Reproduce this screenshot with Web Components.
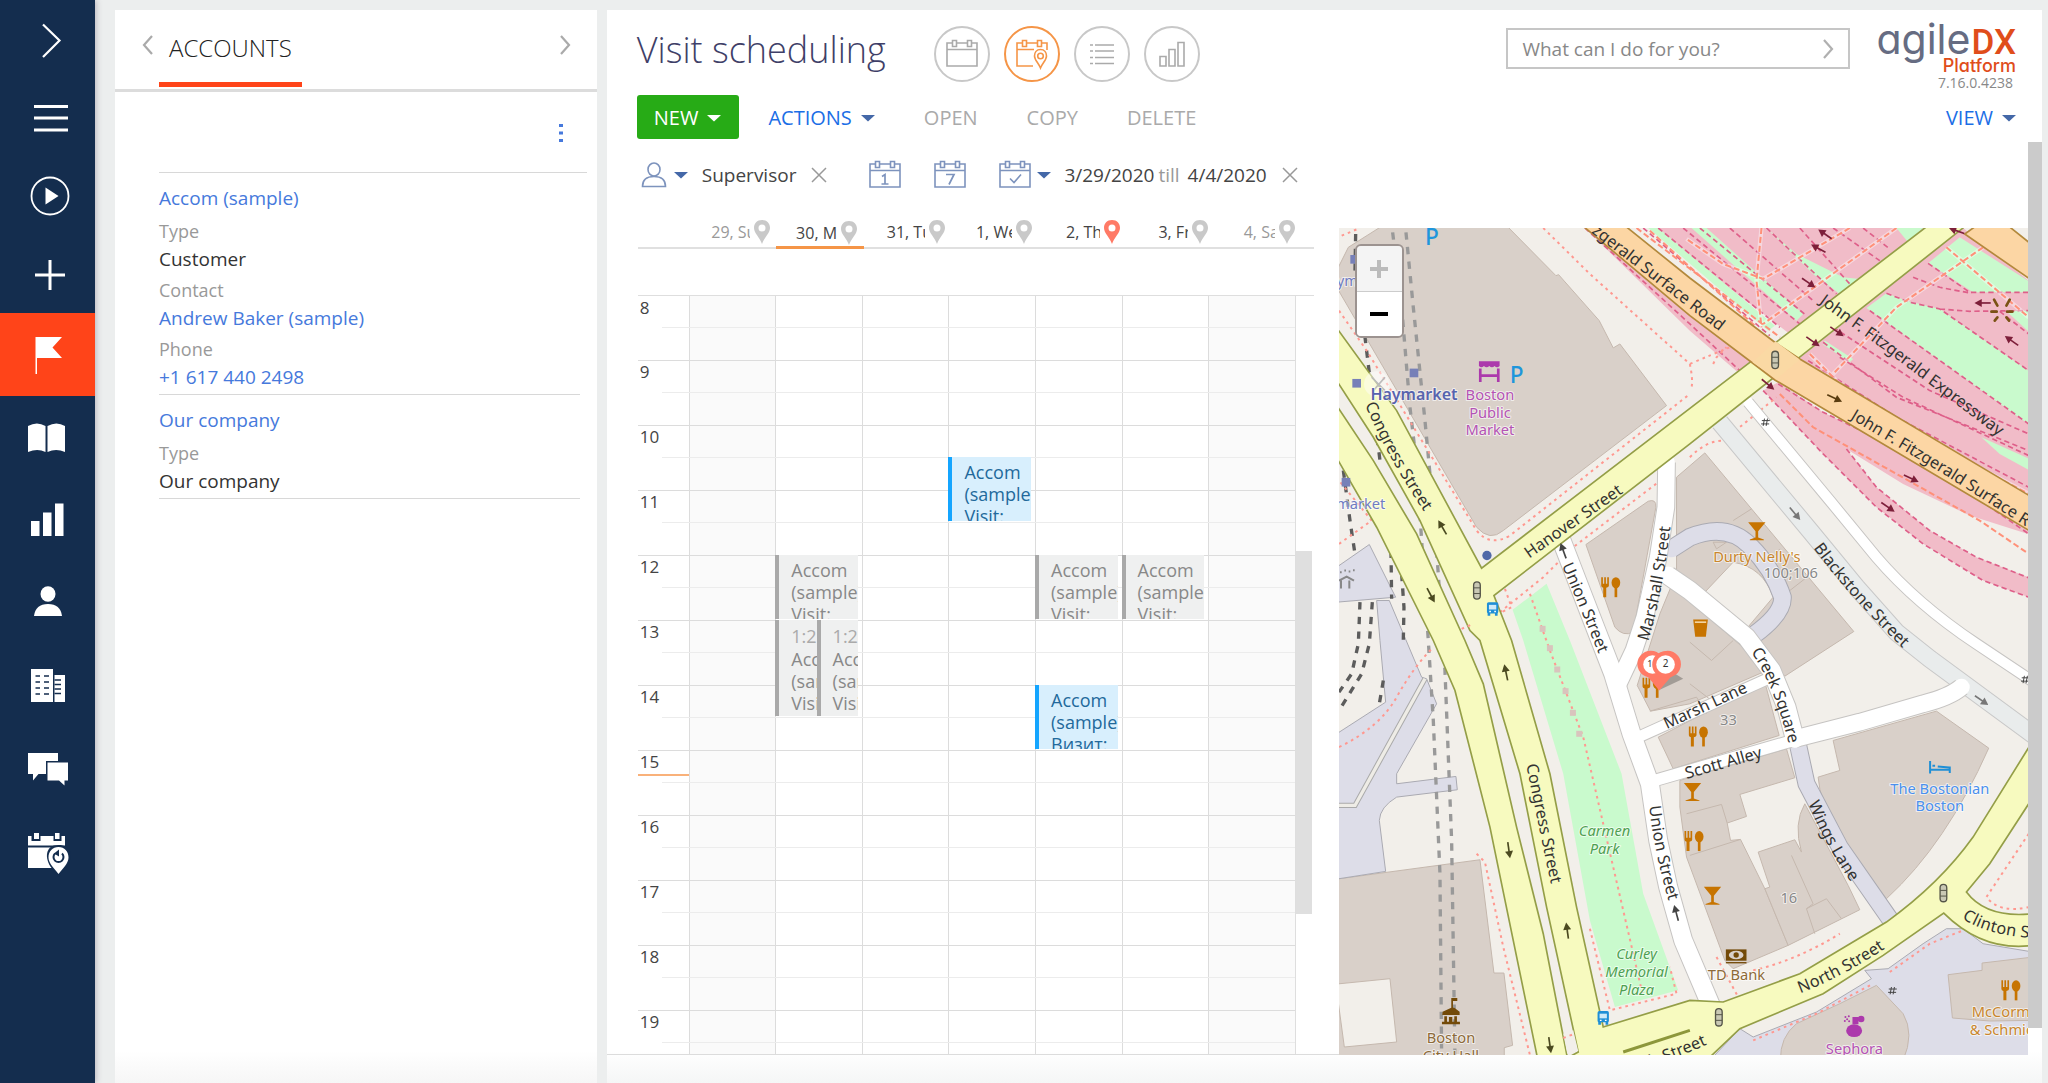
<!DOCTYPE html>
<html lang="en">
<head>
<meta charset="utf-8">
<title>Visit scheduling</title>
<style>
  html, body { margin: 0; height: 100%; }
  body {
    font-family: "Open Sans", "Noto Sans", sans-serif;
    font-size: 19px;
    color: #444;
    background: #eceeee;
    overflow: hidden;
  }
  a { color: #4679dc; text-decoration: none; }
</style>
</head>
<body>
<app-shell>
  <side-nav slot="nav"></side-nav>
  <account-panel slot="aside" heading="ACCOUNTS">
    <account-card>
      <a slot="name" href="#accom">Accom (sample)</a>
      <account-field label="Type">Customer</account-field>
      <account-field label="Contact"><a href="#baker">Andrew Baker (sample)</a></account-field>
      <account-field label="Phone"><a href="#phone">+1 617 440 2498</a></account-field>
    </account-card>
    <account-card last>
      <a slot="name" href="#our">Our company</a>
      <account-field label="Type">Our company</account-field>
    </account-card>
  </account-panel>
  <schedule-page></schedule-page>
</app-shell>

<script>
const base = `
  *, *::before, *::after { box-sizing: border-box; }
  button { font: inherit; color: inherit; background: none; border: 0; padding: 0; margin: 0; cursor: pointer; }
  svg { display: block; }
`;
function define(name, css, html) {
  customElements.define(name, class extends HTMLElement {
    constructor() {
      super();
      this.attachShadow({ mode: 'open' });
    }
    connectedCallback() {
      const body = typeof html === 'function' ? html(this) : html;
      this.shadowRoot.innerHTML = `<style>${base}${css}</style>${body}`;
    }
  });
}

/* ---------- icons ---------- */
const cal = (inner) => `<g fill="none" stroke="currentColor" stroke-width="1.6"><path d="M6.5 5H1v23h30V5h-5.500M10.500 5h11M1 11.500h30"/><path d="M6.500 2.500h4v6h-4zM21.500 2.500h4v6h-4z"/></g>${inner}`;
const ICONS = {
  expand: ['95 78', '<path d="M43 24.500 59.500 40.500 43 57" fill="none" stroke="#fff" stroke-width="2.200"/>'],
  menu: ['95 78', '<path d="M34 28.500h34M34 40h34M34 52h34" stroke="#fff" stroke-width="3"/>'],
  play: ['95 78', '<circle cx="50" cy="40" r="18.500" fill="none" stroke="#fff" stroke-width="1.800"/><path d="M45.500 31.500v17l13-8.500z" fill="#fff"/>'],
  plus: ['95 79', '<path d="M35 41h30M50 26v30" stroke="#fff" stroke-width="3"/>'],
  flag: ['95 83', '<path d="M35.500 24H62l-9.500 10.500L62 45H37v16h-1.500z" fill="#fff"/>'],
  book: ['95 83', '<path d="M28 30q9-5 17.500 0v26q-8-4-17.500 0zM47.500 30q9-5 17.500 0v26q-9-4-17.500 0z" fill="#fff"/>'],
  chart: ['95 83', '<path d="M31 42h8.500v15H31zM43 33.500h8.500V57H43zM55 24.500h8.500V57H55z" fill="#fff"/>'],
  person: ['95 83', '<ellipse cx="48" cy="32" rx="7.500" ry="7.700" fill="#fff"/><path d="M34 54q1.500-12 14-12t14 12z" fill="#fff"/>'],
  building: ['95 83', '<path d="M31 24h22v33H31zM54.500 30H65v27H54.500z" fill="#fff"/><path d="M35.500 31h4.500m4 0h5m-13.500 6h4.500m4 0h5m-13.500 6h4.500m4 0h5m-13.500 6h4.500m4 0h5M54.500 35h6.500m-6.500 4.500h6.500m-6.500 4.500h6.500m-6.500 4.500h6.500" stroke="#142d4e" stroke-width="1.500"/>'],
  chat: ['95 83', '<path d="M28 25h30v8H46v13h-7.500L33 52.500V46h-5z" fill="#fff"/><path d="M47.500 34.500H68v18h-3.500v5l-5.500-5H47.500z" fill="#fff"/>'],
  visits: ['95 83', '<path d="M28 25h3.500v5h9v-5h13v5h8v-5H65v9.500H28zM34 22h5v6h-5zM55 22h4.500v6H55z" fill="#fff"/><path d="M28 36.500h37V57H28z" fill="#fff"/><path d="M58.500 34c-14 0-14 14-7 23l7 9 8-10c8-12 4-22-8-22z" fill="#142d4e"/><path d="M58.500 36c-6 0-10 4.500-10 10.500 0 6 6 11 10 16.500 4-5.500 10-10.500 10-16.500 0-6-4-10.500-10-10.500z" fill="#fff"/><path d="M55 42.500a5 5 0 1 0 7 0" fill="none" stroke="#142d4e" stroke-width="2"/><path d="M54 42.500l5-4v7z" fill="#142d4e"/>'],
  calendar: ['32 32', cal('')],
  calmap: ['32 32', '<g fill="none" stroke="currentColor" stroke-width="1.600"><path d="M6.500 5H1v23h16M26 5h5v7M10.500 5h11M1 11.500h17"/><path d="M6.500 2.500h4v6h-4zM21.500 2.500h4v6h-4z"/><path d="M24.500 11.500c-4 0-6 3-6 6.500 0 4 4 7 6 12 2-5 6-8 6-12 0-3.500-2-6.500-6-6.500z"/><circle cx="24.500" cy="18" r="2.800"/></g>'],
  list: ['32 32', '<path d="M4 7h3m2 0h19M4 13h3m2 0h19M4 19.500h3m2 0h19M4 25.500h3m2 0h19" stroke="currentColor" stroke-width="1.600"/>'],
  bars: ['32 32', '<path d="M4 18.500h6V28H4zM13 11.500h6V28h-6zM22 4.500h6V28h-6z" fill="none" stroke="currentColor" stroke-width="1.600"/>'],
  day: ['32 32', cal('<path d="M13 17.500l3-2V25m-3.500 0h7" fill="none" stroke="currentColor" stroke-width="1.700"/>')],
  week: ['32 32', cal('<path d="M12 15.500h8L15 25.500" fill="none" stroke="currentColor" stroke-width="1.700"/>')],
  check: ['32 32', cal('<path d="M11 19.500l4 4 7-8" fill="none" stroke="currentColor" stroke-width="1.600"/>')],
  user: ['26 26', '<g fill="none" stroke="currentColor" stroke-width="1.600"><ellipse cx="13" cy="7.500" rx="6" ry="6.500"/><path d="M1.500 24.500c0-7 4-10 11.500-10s11.500 3 11.500 10z"/></g>'],
  caret: ['14 8', '<path d="M0 1h14L7 7.500z" fill="currentColor"/>'],
  close: ['16 16', '<path d="M1 1l14 14M15 1 1 15" stroke="currentColor" stroke-width="1.500"/>'],
  left: ['12 20', '<path d="M10 1 2 10l8 9" fill="none" stroke="currentColor" stroke-width="2.200"/>'],
  right: ['12 20', '<path d="M2 1l8 9-8 9" fill="none" stroke="currentColor" stroke-width="2.200"/>'],
  dots: ['4 20', '<path d="M0 1h4v3H0zM0 8.500h4v3H0zM0 16h4v3H0z" fill="currentColor"/>'],
  pin: ['16 24', '<path fill-rule="evenodd" d="M8 0C3 0 0 3.500 0 8c0 5 5.500 9 8 16 2.500-7 8-11 8-16 0-4.500-3-8-8-8zm0 4.500a3.500 3.500 0 1 1 0 7 3.500 3.500 0 0 1 0-7z" fill="currentColor"/>']
};
define('ui-icon', ':host{display:block;flex:none}', el => {
  const [size, art] = ICONS[el.getAttribute('name')];
  const [w, h] = size.split(' ');
  return `<svg width="${w}" height="${h}" viewBox="0 0 ${w} ${h}" aria-hidden="true">${art}</svg>`;
});

/* ---------- page frame ---------- */
define('app-shell', `
  :host { display: flex; height: 100vh; }
  .area { flex: 1; min-width: 0; display: flex; gap: 10px; padding: 10px 6px 0 20px; }
  .aside { flex: 0 0 25%; display: flex; }
  .main { flex: 1; min-width: 0; display: flex; }
`, `<slot name="nav"></slot><div class="area"><div class="aside"><slot name="aside"></slot></div><div class="main"><slot></slot></div></div>`);

define('side-nav', `
  :host { display: block; flex: 0 0 95px; background: #142d4e; box-shadow: 1px 0 6px rgba(60,40,70,.3); position: relative; }
  nav { display: flex; flex-direction: column; }
  .active { background: #ff4419; }
`, `<nav aria-label="Main">${[['expand','Expand'],['menu','Menu'],['play','Run process'],['plus','Add'],['flag','Field sales'],['book','Knowledge base'],['chart','Dashboards'],['person','Contacts'],['building','Accounts'],['chat','Feed'],['visits','Visits']]
  .map(([n, t]) => `<button aria-label="${t}" class="${n === 'flag' ? 'active' : ''}"><ui-icon name="${n}"></ui-icon></button>`).join('')}</nav>`);

/* ---------- accounts ---------- */
define('account-panel', `
  :host { display: flex; flex-direction: column; flex: 1; background: linear-gradient(#fff 97%, #f6f6f6); }
  header { display: flex; align-items: stretch; height: 82px; padding: 0 26px 2px 27px; border-bottom: 3px solid #dcdcdc; color: #aaa; }
  h2 { margin: 0 auto 0 5px; padding: 2px 10px 0; border-bottom: 5px solid #ff4419; font-size: 24px; font-weight: 300; line-height: 72px; color: #222; }
  header button { align-self: center; padding-bottom: 8px; }
  .tools { display: flex; justify-content: flex-end; height: 80px; padding: 31px 34px 0 0; color: #4679dc; }
  .tools button { align-self: flex-start; }
  .cards { padding: 0 10px 0 44px; }
`, el => `<header><button aria-label="Previous"><ui-icon name="left"></ui-icon></button><h2>${el.getAttribute('heading')}</h2><button aria-label="Next"><ui-icon name="right"></ui-icon></button></header>
  <div class="tools"><button aria-label="More"><ui-icon name="dots"></ui-icon></button></div>
  <div class="cards"><slot></slot></div>`);

define('account-card', `
  :host { display: block; border-top: 1px solid #d8d8d8; padding-top: 11px; padding-bottom: 3px; line-height: 28px; }
  :host([last]) { margin-right: 7px; border-bottom: 1px solid #d8d8d8; }
  .name { padding-bottom: 2px; }
`, `<div class="name"><slot name="name"></slot></div><slot></slot>`);

define('account-field', `
  :host { display: block; padding-top: 3px; }
  .label { font-size: 18px; color: #999; }
  .value { color: #333; }
`, el => `<div class="label">${el.getAttribute('label')}</div><div class="value"><slot></slot></div>`);

/* ---------- schedule page ---------- */
define('schedule-page', `
  :host { display: flex; flex-direction: column; flex: 1; min-width: 0; background: linear-gradient(#fff 97%, #f5f6f6); }
  .top { display: flex; align-items: center; height: 85px; padding: 2px 26px 0 30px; }
  h1 { margin: 0 48px 0 0; font-size: 36px; font-weight: 300; line-height: 50px; color: #3f3f68; padding-bottom: 8px; }
  .body { flex: 1; min-height: 0; display: grid; grid-template-columns: minmax(0, 51fr) minmax(0, 49fr); }
  .side { display: flex; min-height: 0; }
  city-map { flex: 1; min-width: 0; margin: 86px 0 28px; }
  .bar { flex: 0 0 14px; margin-bottom: 55px; background: #cbcbcb; }
  .search { display: flex; align-items: center; width: 344px; height: 41px; margin: 0 26px 10px auto; padding-right: 14px; border: 2px solid #c6c6c6; color: #b0b0b0; }
  .search input { flex: 1; min-width: 0; border: 0; outline: 0; background: none; padding: 0 0 0 14px; font: inherit; color: #444; }
  .search input::placeholder { color: #888; opacity: 1; }
`, `<div class="top"><h1>Visit scheduling</h1><view-switch></view-switch>
    <div class="search"><input type="text" aria-label="Command line" placeholder="What can I do for you?"><ui-icon name="right"></ui-icon></div><brand-logo></brand-logo></div>
  <action-bar></action-bar>
  <div class="body"><week-calendar></week-calendar><div class="side"><city-map></city-map><div class="bar"></div></div></div>`);

define('view-switch', `
  :host { display: flex; gap: 14px; }
  button { display: grid; place-items: center; width: 56px; height: 56px; border: 2px solid #c8c8c8; border-radius: 50%; color: #aaa; }
  .on { border-color: #f59547; color: #f59547; }
`, ['calendar', 'calmap', 'list', 'bars'].map(n => `<button class="${n === 'calmap' ? 'on' : ''}" aria-label="${n}"><ui-icon name="${n}"></ui-icon></button>`).join(''));

define('brand-logo', `
  :host { display: flex; flex-direction: column; align-items: flex-end; font-family: Inter, sans-serif; font-feature-settings: "cv11"; color: #e04d1b; padding-top: 8px; }
  .word { display: flex; align-items: baseline; gap: 1px; font-size: 41px; line-height: 28px; }
  .word span { color: #666c82; }
  b { font: 500 35px/28px Roboto, sans-serif; }
  .sub { font-size: 18px; line-height: 18px; font-weight: 500; }
  small { font: 14px/16px "Open Sans", sans-serif; color: #888; padding-right: 3px; }
`, `<div class="word"><span>agile</span><b>DX</b></div><div class="sub">Platform</div><small>7.16.0.4238</small>`);

define('action-bar', `
  :host { display: flex; align-items: center; height: 44px; margin-bottom: 3px; padding: 0 26px 0 30px; font-size: 20px; color: #aaa; }
  button { display: flex; align-items: center; gap: 9px; height: 44px; padding-top: 1px; margin-right: 49px; }
  ui-icon { color: #4468a8; }
  .new { padding: 1px 18px 0 17px; margin-right: 29px; border-radius: 3px; background: #27ab16; color: #fff; }
  .new ui-icon { color: #fff; }
  .blue { color: #1b6ee6; }
  .view { margin: 0 0 0 auto; }
`, `<button class="new">NEW<ui-icon name="caret"></ui-icon></button><button class="blue">ACTIONS<ui-icon name="caret"></ui-icon></button>
  <button>OPEN</button><button>COPY</button><button>DELETE</button><button class="blue view">VIEW<ui-icon name="caret"></ui-icon></button>`);

/* ---------- calendar ---------- */
const days = ['29, Sun', '30, Mon', '31, Tue', '1, Wed', '2, Thu', '3, Fri', '4, Sat'];
const hours = [8, 9, 10, 11, 12, 13, 14, 15, 16, 17, 18, 19];
define('week-calendar', `
  :host { display: flex; flex-direction: column; min-width: 0; min-height: 0; }
  .filters { display: flex; align-items: center; height: 68px; padding: 0 0 2px 34px; color: #7d93bd; }
  .filters button { display: flex; align-items: center; }
  .filters .text { color: #444; }
  .filters .x { color: #999; }
  .caret { color: #4468a8; }
  .till { margin: 0 8px 0 4px; color: #999; }
  .wrap { display: flex; flex-direction: column; flex: 1; min-height: 0; padding: 0 25px 0 31px; }
  .days { display: flex; height: 39px; padding: 0 12px 0 51px; border-bottom: 2px solid #e0e0e0; font-size: 16px; color: #444; }
  .day { flex: 1; display: flex; align-items: flex-end; height: 39px; padding-bottom: 5px; }
  .day.off { color: #999; }
  .day.today { border-bottom: 3px solid #f59547; padding-bottom: 1px; }
  .clip { width: 61px; margin-right: 4px; overflow: hidden; line-height: 24px; }
  .clip span { display: block; width: 86px; padding-left: 14px; text-align: center; }
  .day ui-icon { color: #c9c9c9; }
  .day.hot ui-icon { color: #ff7a66; }
  .allday { height: 47px; border-bottom: 1px solid #dedede; }
  .scroll { display: flex; flex: 1; min-height: 0; overflow: hidden; }
  .grid { flex: 1; display: grid; grid-template-columns: 51px repeat(7, minmax(0, 1fr)); grid-template-rows: 31px 33px repeat(11, 32px 33px); }
  .bar { flex: 0 0 19px; padding: 255px 2px 0 0; border-left: 1px solid #dedede; }
  .bar i { display: block; height: 363px; background: #dfdfdf; }
  .col { grid-row: 1 / -1; border-left: 1px solid #dcdcdc; }
  .col.off { background: #fafafa; }
  .hour { grid-column: 1 / -1; border-top: 1px solid #dcdcdc; padding-left: 2px; font-size: 17px; line-height: 22px; }
  .hour.first { border-top-color: transparent; }
  .half { grid-column: 1 / -1; margin-left: 24px; border-top: 1px solid #ececec; }
  .now { grid-column: 1; grid-row: 15; align-self: end; margin-bottom: 6px; height: 2px; background: #f9b17a; }
  .slot { display: flex; min-width: 0; margin: 0 4px 1px 0; }
  .slot visit-card { flex: 1; min-width: 0; }
  .foot { height: 29px; border-top: 1px solid #dcdcdc; }
`, () => {
  const card = (text, kind = '') => `<visit-card ${kind}>${text}</visit-card>`;
  const slot = (c, r, n, body) => `<div class="slot" style="grid-column:${c};grid-row:${r}/span ${n}">${body}</div>`;
  return `<div class="filters">
    <button aria-label="Owner"><ui-icon name="user"></ui-icon><ui-icon class="caret" name="caret" style="margin-left:7px"></ui-icon></button>
    <button class="text" style="margin-left:14px">Supervisor</button><button class="x" aria-label="Clear owner" style="margin-left:15px"><ui-icon name="close"></ui-icon></button>
    <button aria-label="Today" style="margin-left:42px"><ui-icon name="day"></ui-icon></button>
    <button aria-label="This week" style="margin-left:33px"><ui-icon name="week"></ui-icon></button>
    <button aria-label="Period" style="margin-left:33px"><ui-icon name="check"></ui-icon><ui-icon class="caret" name="caret" style="margin-left:6px"></ui-icon></button>
    <button class="text" style="margin-left:13px">3/29/2020</button><span class="till">till</span><button class="text">4/4/2020</button>
    <button class="x" aria-label="Clear period" style="margin-left:15px"><ui-icon name="close"></ui-icon></button></div>
  <div class="wrap">
    <div class="days">${days.map((d, i) => `<div class="day ${i % 6 ? '' : 'off'} ${i === 1 ? 'today' : ''} ${i === 4 ? 'hot' : ''}"><div class="clip"><span>${d}</span></div><ui-icon name="pin"></ui-icon></div>`).join('')}</div>
    <div class="allday"></div>
    <div class="scroll"><div class="grid">
      ${days.map((d, i) => `<div class="col ${i % 6 ? '' : 'off'}" style="grid-column:${i + 2}"></div>`).join('')}
      ${hours.map((h, i) => `<div class="hour ${i ? '' : 'first'}" style="grid-row:${i * 2 + 1}">${h}</div><div class="half" style="grid-row:${i * 2 + 2}"></div>`).join('')}
      <div class="now"></div>
      ${slot(5, 6, 2, card('Accom (sample) Visit:', 'planned'))}
      ${slot(3, 9, 2, card('Accom (sample) Visit:'))}
      ${slot(6, 9, 2, card('Accom (sample) Visit:'))}
      ${slot(7, 9, 2, card('Accom (sample) Visit:'))}
      ${slot(3, 11, 3, card('Accom (sample) Visit:', 'time="1:20"') + card('Accom (sample) Visit:', 'time="1:20"'))}
      ${slot(6, 13, 2, card('Accom (sample) Визит:', 'planned'))}
    </div><div class="bar"><i></i></div></div>
  </div><div class="foot"></div>`;
});
define('visit-card', `
  :host { display: block; overflow: hidden; padding: 4px 0 0 12px; border-left: 4px solid #a9a9a9; background: #eff0f0; color: #888; font-size: 18px; line-height: 22px; }
  :host([planned]) { border-color: #14a5ff; background: #d8effd; color: #22699b; }
  time { display: block; color: #aaa; line-height: 24px; }
`, el => (el.getAttribute('time') ? `<time>${el.getAttribute('time')}</time>` : '') + '<slot></slot>');

/* ---------- map ---------- */
const at = (id, x, y, r = 0, extra = '') => `<use href="#${id}" transform="translate(${x} ${y}) rotate(${r})" ${extra}/>`;
const road = (d, w, fill, edge) => `<path d="${d}" fill="none" stroke="${edge}" stroke-width="${w + 6}" stroke-linejoin="round"/>`;
const roads = (list, fill, edge) => list.map(([d, w]) => road(d, w, fill, edge)).join('') + list.map(([d, w]) => `<path d="${d}" fill="none" stroke="${fill}" stroke-width="${w}" stroke-linejoin="round" stroke-linecap="round"/>`).join('');
let pathNo = 0;
const street = (d, text, extra = '') => { const id = 'st' + (++pathNo); return `<path id="${id}" d="${d}" fill="none"/><text class="street"><textPath href="#${id}" ${extra}>${text}</textPath></text>`; };
const label = (x, y, lines, color, extra = '') => `<text x="${x}" y="${y}" fill="${color}" text-anchor="middle" ${extra}>${lines.map((l, i) => `<tspan x="${x}" dy="${i ? 53 : 0}">${l}</tspan>`).join('')}</text>`;

define('city-map', `
  :host { display: block; position: relative; overflow: hidden; background: #f2efea; }
  .canvas { width: 100%; height: 100%; }
  text { font-family: "Noto Sans", sans-serif; font-size: 44px; paint-order: stroke; stroke: rgba(255,255,255,.65); stroke-width: 6px; stroke-linejoin: round; }
  .street { font-size: 49px; fill: #333331; stroke: none; dominant-baseline: central; }
  .b { fill: #d9d0c9; stroke: #c5b8ae; stroke-width: 3; stroke-linejoin: round; }
  .bg { fill: #f2efea; stroke: #c5b8ae; stroke-width: 3; }
  .lav { fill: #dddde8; stroke: #aaaab2; stroke-width: 3; }
  .y { fill: #f7fabf; stroke: #949e47; stroke-width: 5; }
  .o { fill: #fcd6a4; stroke: #b3893c; stroke-width: 5; }
  .g { fill: #c9facd; }
  .pk { fill: #f1bcc8; }
  .pd { fill: none; stroke: #de5f89; stroke-width: 5; stroke-dasharray: 16 10; }
  .foot { fill: none; stroke: #ff9890; stroke-width: 6; stroke-dasharray: 8 12; }
  .walk { fill: none; stroke: #ff9078; stroke-width: 6; stroke-dasharray: 18 9; }
  .halo { fill: none; stroke: #fff; stroke-opacity: .4; stroke-width: 13; }
  .rail { fill: none; stroke: #999; stroke-width: 10; stroke-dasharray: 22 22; }
  .dark { stroke: #5c5c5c; }
  .zoom { position: absolute; left: 16px; top: 16px; display: flex; flex-direction: column; border: 2px solid #9c9390; border-radius: 6px; overflow: hidden; }
  .zoom button { display: grid; place-items: center; width: 45px; height: 45px; background: #fff; color: #000; }
  .zoom button + button { border-top: 1px solid #ccc; }
  .zoom button:first-child { background: #f4f4f4; color: #bbb; }
`, () => `
<svg class="canvas" viewBox="27 22 2070 2482" preserveAspectRatio="xMinYMin slice" role="img" aria-label="Map of visits">
<defs>
  <g id="arr"><path d="M-25 0H5" stroke="currentColor" stroke-width="5"/><path d="M2-12 24 0 2 12z" fill="currentColor"/></g>
  <g id="light"><rect x="-10" y="-26" width="20" height="52" rx="10" fill="#c9c8b4" stroke="#555548" stroke-width="4"/><path d="M-10-8h20M-10 9h20" stroke="#555548" stroke-width="3"/></g>
  <g id="eat" fill="#c77400"><path d="M-28-30h5v20h4v-20h5v20h4v-20h5v26q0 5-8 6v28h-9V2q-6-1-6-6z"/><ellipse cx="16" cy="-13" rx="13" ry="17"/><path d="M12 0h8v30h-8z"/></g>
  <g id="drink" fill="#c77400"><path d="M-26-27h52L4 0v19l17 6v2h-42v-2l17-6V0z"/></g>
  <g id="bus"><rect x="-17" y="-20" width="34" height="34" rx="5" fill="#1f8fd6"/><path d="M-11-12h22V2h-22z" fill="#cfeaf8"/><path d="M-15 12h8v9h-8zM7 12h8v9H7z" fill="#1f8fd6"/><path d="M-10 8h5M5 8h5" stroke="#fff" stroke-width="4"/></g>
  <g id="gate"><path d="M-11-5h24M-13 5h24M-3-11l-4 22M6-11 2 11" stroke="#444" stroke-width="3"/></g>
  <g id="sq"><path d="M-13-13h26v26h-26z" fill="#7780b8"/></g>
  <g id="step"><path d="M-9-9h18v18H-9z" fill="#d9c4bd"/></g>
</defs>
<rect x="0" y="0" width="2200" height="2600" fill="#f2efea"/>

<path class="b" d="M20 150 55 80 150 20H535L678 165l8-3L808 300l42 82 20-12 140 185L520 930Q480 965 440 920L20 200z"/>
<path class="b" d="M768 972 955 842q25-8 23 18L910 1235q-30 15-55-15z"/>
<path class="b" d="M1040 770 1125 697 1572 1233 1365 1367 1240 1240 1040 1060z"/>
<path class="b" d="M990 1180 1025 1095 1250 1290 1300 1355 1080 1450 962 1472 922 1395z"/>
<path class="b" d="M985 1550 1305 1385 1348 1545 1030 1645z"/>
<path class="b" d="M1050 1680 1370 1585 1395 1672 1230 1722 1250 1788 1192 1808 1202 1860 1232 1857 1305 2005 1375 2175 1210 2245 1185 2220 1070 1910 1050 1760z"/>
<path class="b" d="M1285 1895 1395 1858 1415 1895Q1390 1810 1425 1750L1555 1995 1590 2068 1375 2175 1305 2005 1320 2000z"/>
<path class="b" d="M1510 1560 1820 1472 1977 1583Q1850 1870 1670 2035L1520 1840Q1470 1740 1465 1670L1530 1650z"/>
<path class="b" d="M20 1976 450 1918 492 2258H522L548 2475 523 2482V2520H20z"/>
<path class="bg" d="M20 2291 180 2275 200 2465 43 2480 20 2310z"/>
<path class="bg" d="M1125 1115 1210 1025Q1300 1040 1330 1130L1250 1225z"/>
<path d="M1150 965 1190 965 1160 985zM960 1472 1100 1430 1130 1480M1070 1780 1175 1752 1192 1808M1080 1905 1232 1857M1385 1905 1450 2050 1430 2065 1455 2140M1430 2065 1490 2035 1535 2095M1080 1390 1145 1440M1080 1265 1145 1320 1210 1260M1210 900 1265 865M1300 1050 1350 985M1380 1110 1425 1075" class="b" style="fill:none"/>

<path class="lav" d="M20 1040 118 972 197 1130 20 1145z"/>
<path class="lav" d="M140 1140H178L275 1370 290 1375 320 1450 200 1660V1690L378 1668 382 1708 200 1730Q150 1760 148 1800L167 1953 20 1976V1540L167 1445 150 1260z"/>
<path d="M285 1375 75 1755H20" fill="none" stroke="#aaa" stroke-width="16"/><path d="M285 1375 75 1755H20" fill="none" stroke="#eeece6" stroke-width="10"/>
<path class="lav" d="M1605 2250 1675 2245 1780 2170 1850 2125 1900 2125 1960 2170 2110 2195V2520H1140L1230 2425 1270 2450 1460 2375 1625 2275z"/>
<path class="b" d="M1640 2295 1720 2380Q1755 2440 1720 2520H1352Q1350 2450 1400 2410L1530 2350z"/>
<path class="b" d="M1855 2263 1957 2250V2228L2110 2210V2400L1980 2402 1868 2393z"/>

<path class="g" d="M548 1168 650 1090 720 1260 875 1660 940 2020 1045 2310 855 2360 780 2100 700 1660 580 1260z"/>

<path class="pk" d="M765 22 1080 285 1270 430 1230 460 1080 330z"/>
<path class="pk" d="M930 22H1790L1340 365 1080 160z"/>
<path d="M890 22H960L1380 340 1330 370z" fill="#f2efea"/>
<path class="g" d="M955 22H985L1335 315 1315 330zM1085 22H1130L1420 280 1400 300zM1310 22 1400 100 1540 170 1590 175 1530 220 1450 160zM1700 22H1780L1735 65z"/>
<path class="pk" d="M1400 420 1900 22 2110 190V830z"/>
<path class="g" d="M1610 262 1670 218 1730 240 1830 265 2110 460V620z"/>
<path class="g" d="M1795 128 1890 50 2110 190V215H1930zM2110 270 2030 272 2110 345zM1485 360 1570 415 1560 425 1480 372zM1955 650 2110 720V755L2010 700z"/>
<path class="pk" d="M1300 510 1345 485 1480 575 1780 720 2110 930V945L1920 885 1720 790 1550 685 1640 800 1800 930 1940 1010 2110 1075V1135L1960 1080 1780 970 1640 860 1480 700z"/>
<path class="pd" d="M940 22 1320 345M985 22 1350 320M1060 22 1410 310M1110 22 1430 285M1200 22 1450 240M1310 22 1520 220M1410 22 1560 190M1510 22 1650 120M1600 22 1680 85M1480 365 1700 530 2097 690M1510 320 1800 510 2097 640M1620 270 2097 610M1670 218 1740 245 1830 265 2097 450M1795 128 1920 215 2097 215M1750 170 1830 200 1925 218M1830 265 1920 272 2097 270M2010 272 2097 340M1530 410 1720 530 2097 705M1300 510 1480 700 1640 860 1780 970 1960 1080 2097 1130M1345 490 1480 575 1780 720 2097 940M1550 685 1640 800 1800 930 1940 1010 2097 1072M765 22 1080 310 1230 450M1435 420 1700 590 2097 800"/>
<path class="halo" d="M1295 22 1280 180 1295 320M1560 22 1300 175 1180 130 1070 55M1700 22 1300 310M1960 80 1700 260 1510 460M1850 80 2097 290M1440 400 1600 560 2097 820"/>
<path class="walk" d="M1295 22 1280 180 1295 320M1560 22 1300 175 1180 130 1070 55M1700 22 1300 310M1960 80 1700 260 1510 460M1850 80 2097 290M1440 400 1600 560 2097 820M960 30 1280 320M920 22 1350 350M1350 520 1450 620 1700 760 1950 900 2097 1000"/>

<path class="rail" d="M188 35 215 260 240 560 255 690M228 35 250 260 285 600 300 760M270 880 275 960 295 1260 310 1500 330 1960 335 2504M320 990 345 1350 365 1860 375 2504"/>
<path class="rail dark" d="M77 40 75 150 105 350 150 720M40 750 60 900 75 1000M183 990 185 1135M215 1060 222 1160 220 1260M90 1145 85 1270 65 1360 27 1415M127 1145 118 1270 95 1360 27 1470M160 1380 148 1450"/>
<path class="foot" d="M27 270 110 390 300 700 440 930Q480 980 540 945L1080 520M640 22 780 160 1080 430M525 1105 545 1160 515 1175M600 1120 660 1290 760 1550 940 2330M440 1900 465 1925 520 2180 600 2504M780 2125 840 2370 1040 2320 1020 2240M27 1580Q150 1520 200 1430T310 1280M27 970 125 900 27 780M510 1175 640 1070 730 980 985 785M1080 430Q1150 400 1200 380M1080 710Q1130 660 1180 660L1340 530M1270 2250Q1400 2220 1530 2140M1160 2210 1225 2330M1270 2460 1460 2380 1630 2290M1680 2255 1800 2170 1900 2130M2097 1840 1970 2030Q2010 2080 2097 2060M35 45 90 22"/>
<path class="foot" d="M1080 430Q1090 480 1085 500M1150 430 1160 410 1190 380"/>

${roads([['M1025 985 1080 950Q1190 905 1260 975T1358 1130Q1360 1180 1270 1245', 50], ['M1405 1575 1430 1690 1530 1880 1690 2110', 48]], '#dddde8', '#aaaab2')}
${roads([['M1170 605 1440 930 1580 1100 1700 1235 1800 1315 2120 1550', 50]], '#e9ecec', '#c8c8c8')}
${roads([['M1255 545 1500 840 1640 1010Q1760 1150 1940 1270L2120 1390', 30],
  ['M695 960 780 1180 850 1360 905 1540 960 1690 985 1860 1015 2000 1060 2160 1145 2360', 54],
  ['M1010 725 1008 860 985 1010 945 1190 912 1290 865 1390', 50],
  ['M1015 1065 1080 1110 1250 1250 1325 1350 1370 1460 1395 1555', 54],
  ['M930 1548 1320 1372', 32], ['M975 1680 1390 1560', 34], ['M1395 1555 1590 1505 1780 1450Q1860 1430 1895 1400', 50]], '#fff', '#c6c4c2')}

<path class="y" d="M20 322 200 570 455 1043 1840 -20 2000 -90 1900 22 1080 670 492 1125 545 1260 660 1660 740 2060 820 2420 1080 2340 1180 2345 1410 2260 1670 2105Q1830 1990 1930 1850L2110 1560V1730L1980 1930 1910 2015Q1970 2095 2110 2080V2175Q1960 2195 1842 2078L1660 2205 1480 2320 1230 2425 1130 2520H700L745 2495 650 2060 570 1660 450 1260 420 1230 270 900 130 650 20 480z"/>
<path class="y" d="M20 555 130 720 260 940 405 1260 460 1390 560 1820 640 2140 712 2510H622L480 1820 375 1410 310 1260 140 920 20 712z"/>
<path d="M880 2495 1080 2430" stroke="#8d973b" stroke-width="9"/><path d="M712 2500 745 2492 730 2430 700 2440z" fill="#f2efea"/>
<path class="o" d="M758 15 885 15 1080 172 1335 365 1410 415 2110 832V937L1335 478 1265 425 1080 285z"/>
<path class="o" d="M1905 40 2110 182V75L2035 15H1940z"/>
<path d="M1337 362 1410 417 1340 475 1268 425z" fill="#fad9a4"/>
<path class="foot" d="M395 1225 430 1210M700 2453 735 2440"/>

<circle cx="471" cy="1005" r="14" fill="#5069a8"/>
<circle cx="140" cy="490" r="38" fill="#fff" fill-opacity=".45"/>
<path d="M125 470 165 510M165 470 130 510" stroke="#bbb" stroke-width="5"/>
${at('sq', 74, 116)}${at('sq', 80, 488)}${at('sq', 252, 457)}${at('sq', 48, 785)}
${at('step', 638, 1225)}${at('step', 660, 1283)}${at('step', 682, 1347)}${at('step', 707, 1412)}${at('step', 729, 1477)}${at('step', 748, 1540)}
<g color="#4b4a20">${at('arr', 337, 920, 240)}${at('arr', 303, 1125, 62)}${at('arr', 528, 1355, 258)}${at('arr', 537, 1890, 82)}${at('arr', 712, 2130, 262)}${at('arr', 660, 2475, 82)}</g>
<g color="#444">${at('arr', 700, 990, 250)}${at('arr', 1039, 2077, 255)}</g><g color="#777">${at('arr', 1396, 880, 50)}${at('arr', 1956, 1440, 35)}</g>
<g color="#5a3d10">${at('arr', 1515, 533, 25)}</g>
<g color="#7d1f3a">${at('arr', 1485, 40, 215)}${at('arr', 1465, 83, 208)}${at('arr', 1437, 187, 35)}${at('arr', 1522, 333, 35)}${at('arr', 1450, 363, 35)}${at('arr', 1315, 492, 40)}${at('arr', 1745, 774, 25)}${at('arr', 1675, 860, 35)}${at('arr', 1958, 247, 180)}${at('arr', 2045, 360, 215)}${at('arr', 1880, 30, 200)}</g>
<g stroke="#7a5215" stroke-width="8" stroke-linecap="round"><path d="M1985 273h16M2032 273h16M2003 255l-10-18M2030 255l10-18M2003 290l-8 10M2030 290l8 10"/></g>
${at('light', 441, 1110)}${at('light', 1336, 418)}${at('light', 1841, 2018)}${at('light', 1167, 2391)}
${at('bus', 488, 1165)}${at('bus', 820, 2392)}
${at('eat', 842, 1100)}${at('eat', 1105, 1548)}${at('eat', 1092, 1862)}${at('eat', 2043, 2310)}${at('eat', 966, 1402)}
${at('drink', 1281, 932)}${at('drink', 1088, 1715)}${at('drink', 1148, 2026)}
<path d="M1090 1197h44l-6 52h-32z" fill="#c77400"/><path d="M1095 1205h34" stroke="#f2d3a0" stroke-width="5"/>
${at('gate', 1307, 605)}${at('gate', 2087, 1377)}${at('gate', 1688, 2311)}
<g fill="#ac39ac"><path d="M447 422h62v14q-8 8-15 0-8 8-16 0-8 8-16 0-8 8-15 0zM447 444h8v40h-8zM501 444h8v40h-8zM447 461h62v8h-62z"/></g>
<g fill="#ac39ac"><ellipse cx="1573" cy="2431" rx="24" ry="19"/><path d="M1568 2390h18v22h-18zM1580 2392h18v7h-18z"/><circle cx="1594" cy="2396" r="10"/><circle cx="1547" cy="2390" r="3"/><circle cx="1557" cy="2388" r="3"/><circle cx="1552" cy="2397" r="3"/><circle cx="1545" cy="2402" r="3"/><circle cx="1558" cy="2403" r="3"/></g>
<path d="M1801 1622v37M1801 1648h60M1860 1638v20M1808 1636h8M1824 1638l34 3" stroke="#1f8fd6" stroke-width="6" fill="none"/>
<path d="M1188 2187h62v34h-62z" fill="#734a08"/><ellipse cx="1219" cy="2204" rx="22" ry="13" fill="#d9d0c9"/><circle cx="1219" cy="2204" r="8" fill="#734a08"/><path d="M1188 2227h62" stroke="#734a08" stroke-width="4"/>
<path d="M337 2384h52v-10l-16-12h-4v-20h13v-9h-18v29l-26 12zM343 2388h8v18h-8zM373 2388h8v18h-8zM357 2390h10v16h-10zM336 2404h54v8h-54z" fill="#734a08"/>
<path d="M27 1080 50 1068 72 1080M33 1080v24M58 1080v24M30 1055h5m8-5h5m8 3h5m8-4h5" stroke="#888" stroke-width="6" fill="none"/>

${label(306, 73, ['P'], '#1f96dc', 'style="font-size:68px;font-weight:500;stroke:none"')}
${label(560, 486, ['P'], '#1f96dc', 'style="font-size:68px;font-weight:500;stroke:none"')}
${label(252, 538, ['Haymarket'], '#5763ae', 'style="font-size:48px;font-weight:600"')}
${label(52, 196, ['ym'], '#6f7cc2')}${label(92, 865, ['market'], '#6f7cc2')}
${label(480, 538, ['Boston', 'Public', 'Market'], '#b453b4')}
${label(1281, 1025, ["Durty Nelly's"], '#c9862c')}${label(1383, 1073, ['100;106'], '#888')}
${label(1196, 1515, ['33'], '#888')}${label(1377, 2048, ['16'], '#888')}
${label(824, 1848, ['Carmen', 'Park'], '#4fa052', 'font-style="italic"')}
${label(920, 2217, ['Curley', 'Memorial', 'Plaza'], '#4fa052', 'font-style="italic"')}
${label(1830, 1720, ['The Bostonian', 'Boston'], '#4a90ee')}
${label(1220, 2280, ['TD Bank'], '#8d6a38')}${label(363, 2468, ['Boston', 'City Hall'], '#8d6a38')}
${label(1574, 2502, ['Sephora'], '#b453b4')}
<text x="1926" y="2390" fill="#c9862c">McCorm</text><text x="1920" y="2443" fill="#c9862c">&amp; Schmic</text>

${street('M122 545Q185 700 312 885', 'Congress Street')}
${street('M588 1000 890 788', 'Hanover Street')}
${street('M712 1028Q770 1160 850 1360', 'Union Street')}
${street('M938 1258Q985 1100 1008 880', 'Marshall Street')}
${street('M690 -60 930 125 1180 318', 'zgerald Surface Road', 'startOffset="100%" text-anchor="end"')}
${street('M1478 232 1680 378 2060 665', 'John F. Fitzgerald Expressway')}
${street('M1570 578 1850 745 2180 955', 'John F. Fitzgerald Surface R')}
${street('M1465 972Q1590 1140 1780 1315', 'Blackstone Street')}
${street('M1278 1285Q1355 1390 1405 1610', 'Creek Square')}
${street('M1003 1510 1290 1378', 'Marsh Lane')}
${street('M1066 1658 1350 1578', 'Scott Alley')}
${street('M976 1755Q990 1900 1050 2090', 'Union Street')}
${street('M607 1630Q640 1800 692 2040', 'Congress Street')}
${street('M1452 1742Q1500 1870 1610 2020', 'Wings Lane')}
${street('M1405 2302Q1540 2250 1700 2140', 'North Street')}
${street('M1906 2078Q1980 2130 2130 2136', 'Clinton St')}
${street('M958 2522Q1050 2490 1160 2440', 'h Street')}

<path d="M990 1408 1020 1350 1060 1375z" fill="#000" fill-opacity=".25"/>
<path d="M988 1410 955 1370A40 40 0 1 1 988 1300 40 40 0 1 1 1022 1370z" fill="#ff7a66"/>
<circle cx="968" cy="1332" r="28" fill="#fff"/><circle cx="1007" cy="1332" r="40" fill="#ff7a66"/><circle cx="1007" cy="1332" r="28" fill="#fff"/>
<text x="952" y="1341" style="font-size:27px;stroke:none" fill="#333">1</text><text x="999" y="1341" style="font-size:30px;stroke:none" fill="#333">2</text>
</svg>
<div class="zoom"><button aria-label="Zoom in"><svg width="18" height="18"><path d="M0 9h18M9 0v18" stroke="currentColor" stroke-width="4"/></svg></button><button aria-label="Zoom out"><svg width="18" height="18"><path d="M0 9h18" stroke="currentColor" stroke-width="4"/></svg></button></div>`);
</script>
</body>
</html>
